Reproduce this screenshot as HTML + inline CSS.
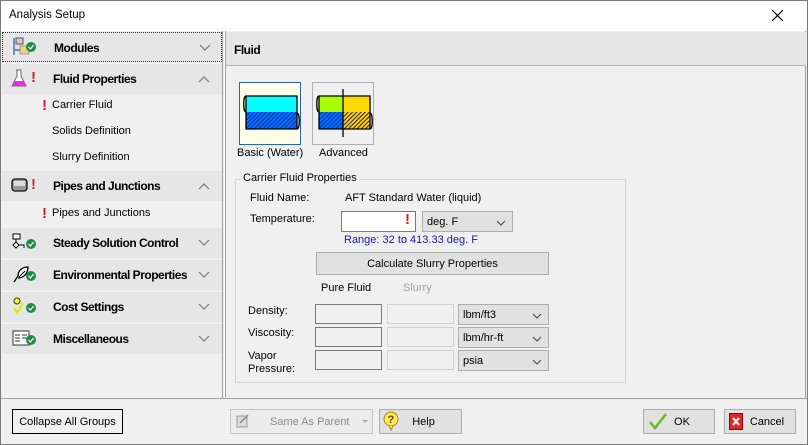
<!DOCTYPE html>
<html><head><meta charset="utf-8"><style>
*{box-sizing:border-box;margin:0;padding:0}
body{width:808px;height:445px;overflow:hidden;font-family:"Liberation Sans",sans-serif;font-size:11px;color:#000;background:#f0f0f0;position:relative}
.a{position:absolute}
.win{left:0;top:0;width:808px;height:445px;border:1px solid #7a7a7a;background:#f0f0f0}
.hd{left:2px;width:220px;height:30px;background:#e6e6e6;font-weight:bold;font-size:12px;letter-spacing:-0.5px}
.hd span.t{position:absolute;left:51px;top:8px}
.chev{position:absolute;left:196px;top:11px;width:12px;height:8px}
.it{left:52px;font-size:11px}
.ex{color:#d4202c;font-weight:bold;font-size:15px}
.box{background:#f0f0f0;border:1px solid #7a7a7a}
.box2{background:#f0f0f0;border:1px solid #cfcfcf}
.dd{background:#e1e1e1;border:1px solid #adadad;padding:4px 0 0 4px}
.dd svg{position:absolute;right:6px;top:8px}
.btn{background:#e1e1e1;border:1px solid #adadad;text-align:center}
</style></head><body>
<div class="a win"></div>
<div class="a" style="left:1px;top:1px;width:806px;height:30px;background:#fff"></div>
<div class="a" style="left:9px;top:9px;font-size:11.5px">Analysis Setup</div>
<svg class="a" style="left:772px;top:10px" width="11" height="11"><path d="M0 0L11 11M11 0L0 11" stroke="#000" stroke-width="1.2"/></svg>

<div class="a" style="left:1px;top:31px;width:222px;height:367px;background:#f0f0f0;border-right:1px solid #a0a0a0"></div>
<div class="a" style="left:224px;top:31px;width:1px;height:367px;background:#fff"></div>

<div class="a hd" style="top:32px;border:1px dotted #333"><span class="t">Modules</span>
<svg class="chev" viewBox="0 0 12 8"><path d="M1 1L6 6L11 1" fill="none" stroke="#777" stroke-width="1.2"/></svg></div>
<div class="a hd" style="top:64px"><span class="t">Fluid Properties</span>
<svg class="chev" viewBox="0 0 12 8"><path d="M1 7L6 2L11 7" fill="none" stroke="#777" stroke-width="1.2"/></svg></div>
<div class="a it" style="top:99px">Carrier Fluid</div>
<div class="a it" style="top:125px">Solids Definition</div>
<div class="a it" style="top:151px">Slurry Definition</div>
<div class="a hd" style="top:171px"><span class="t">Pipes and Junctions</span>
<svg class="chev" viewBox="0 0 12 8"><path d="M1 7L6 2L11 7" fill="none" stroke="#777" stroke-width="1.2"/></svg></div>
<div class="a it" style="top:207px">Pipes and Junctions</div>
<div class="a hd" style="top:228px"><span class="t">Steady Solution Control</span>
<svg class="chev" viewBox="0 0 12 8"><path d="M1 1L6 6L11 1" fill="none" stroke="#777" stroke-width="1.2"/></svg></div>
<div class="a hd" style="top:260px"><span class="t">Environmental Properties</span>
<svg class="chev" viewBox="0 0 12 8"><path d="M1 1L6 6L11 1" fill="none" stroke="#777" stroke-width="1.2"/></svg></div>
<div class="a hd" style="top:292px"><span class="t">Cost Settings</span>
<svg class="chev" viewBox="0 0 12 8"><path d="M1 1L6 6L11 1" fill="none" stroke="#777" stroke-width="1.2"/></svg></div>
<div class="a hd" style="top:324px"><span class="t">Miscellaneous</span>
<svg class="chev" viewBox="0 0 12 8"><path d="M1 1L6 6L11 1" fill="none" stroke="#777" stroke-width="1.2"/></svg></div>

<svg class="a" style="left:12px;top:37px" width="24" height="20"><rect x="4" y="1" width="7" height="6" fill="#ccc" stroke="#555"/><rect x="8" y="9" width="9" height="8" fill="#f3d27a" stroke="#999"/><path d="M2 1V18M3 13H8" stroke="#2850b0" stroke-width="1.2"/><circle cx="19" cy="10" r="5" fill="#1e8a4a"/><path d="M16.5 10l2 2 3-4" stroke="#fff" fill="none" stroke-width="1.2"/></svg>
<svg class="a" style="left:11px;top:69px" width="16" height="20"><path d="M5 1H10M6 1V7L1 17H15L10 7V1" fill="#fff" stroke="#666"/><path d="M3 12H13L15 17H1Z" fill="#e030e0"/></svg>
<div class="a ex" style="left:31px;top:69px">!</div>
<div class="a ex" style="left:42px;top:97px">!</div>
<svg class="a" style="left:11px;top:177px" width="18" height="16"><rect x="1" y="2" width="15" height="12" rx="3" fill="#999" stroke="#111" stroke-width="1.3"/><rect x="3" y="4" width="11" height="5" fill="#ddd"/></svg>
<div class="a ex" style="left:31px;top:176px">!</div>
<div class="a ex" style="left:42px;top:205px">!</div>
<svg class="a" style="left:12px;top:233px" width="24" height="20"><rect x="1" y="1" width="7" height="5" fill="#fff" stroke="#000"/><path d="M4 6V9L1 12L4 15L7 12L4 9M7 12H12V15" fill="#fff" stroke="#000"/><circle cx="19" cy="11" r="5" fill="#1e8a4a"/><path d="M16.5 11l2 2 3-4" stroke="#fff" fill="none" stroke-width="1.2"/></svg>
<svg class="a" style="left:12px;top:265px" width="24" height="20"><path d="M2 17L6 11C6 5 11 2 16 2C16 8 12 13 6 13" fill="#fff" stroke="#000" stroke-width="1.3"/><path d="M7 12L13 6" stroke="#000"/><circle cx="19" cy="11" r="5" fill="#1e8a4a"/><path d="M16.5 11l2 2 3-4" stroke="#fff" fill="none" stroke-width="1.2"/></svg>
<svg class="a" style="left:12px;top:297px" width="24" height="20"><circle cx="5" cy="4" r="3" fill="#ff0" stroke="#333"/><path d="M2 11L5 16L11 6" stroke="#e6e600" stroke-width="2" fill="none"/><circle cx="19" cy="11" r="5" fill="#1e8a4a"/><path d="M16.5 11l2 2 3-4" stroke="#fff" fill="none" stroke-width="1.2"/></svg>
<svg class="a" style="left:12px;top:329px" width="24" height="20"><rect x="1" y="2" width="16" height="14" fill="#fff" stroke="#333"/><path d="M3 6H8M3 9H8M3 12H8M10 6H15M10 9H15" stroke="#333"/><circle cx="19" cy="11" r="5" fill="#1e8a4a"/><path d="M16.5 11l2 2 3-4" stroke="#fff" fill="none" stroke-width="1.2"/></svg>

<div class="a" style="left:225px;top:31px;width:581px;height:367px;background:#f0f0f0;border-left:1px solid #a0a0a0;border-right:1px solid #a0a0a0"></div>
<div class="a" style="left:226px;top:32px;width:580px;height:34px;background:#e6e6e6;border-bottom:1px solid #b5b5b5"></div>
<div class="a" style="left:234px;top:43px;font-weight:bold;font-size:12px;letter-spacing:-0.5px">Fluid</div>

<div class="a" style="left:239px;top:82px;width:62px;height:63px;background:#fffde6;border:1px solid #2a62b0"></div>
<div class="a" style="left:312px;top:82px;width:62px;height:63px;background:#f0f0f0;border:1px solid #b0b0b0"></div>
<svg class="a" style="left:240px;top:83px" width="60" height="61">
<defs><pattern id="h" width="3" height="3" patternUnits="userSpaceOnUse" patternTransform="rotate(45)"><rect width="3" height="3" fill="#0a6cff"/><rect width="1" height="3" fill="#003aa0"/></pattern>
<pattern id="h2" width="3" height="3" patternUnits="userSpaceOnUse" patternTransform="rotate(45)"><rect width="3" height="3" fill="#ffd000"/><rect width="1" height="3" fill="#224"/></pattern></defs>
<rect x="6" y="13" width="51" height="16" fill="#0ff"/><rect x="6" y="29" width="51" height="17" fill="url(#h)"/>
<path d="M6 13H57V46H6Z M6 13C3 13 3 29 6 29 M57 30C60 30 60 46 57 46" fill="none" stroke="#000" stroke-width="1.3"/>
</svg>
<svg class="a" style="left:313px;top:83px" width="60" height="61">
<rect x="6" y="13" width="24" height="16" fill="#a8ff00"/><rect x="30" y="13" width="27" height="16" fill="#ffd800"/>
<rect x="6" y="29" width="24" height="17" fill="url(#h)"/><rect x="30" y="29" width="27" height="17" fill="url(#h2)"/>
<path d="M6 13H57V46H6Z M6 13C3 13 3 29 6 29 M57 30C60 30 60 46 57 46 M30 6V54" fill="none" stroke="#000" stroke-width="1.3"/>
</svg>
<div class="a" style="left:237px;top:147px">Basic (Water)</div>
<div class="a" style="left:319px;top:147px">Advanced</div>

<div class="a" style="left:235px;top:179px;width:391px;height:204px;border:1px solid #d5d5d5"></div>
<div class="a" style="left:241px;top:172px;background:#f0f0f0;padding:0 2px">Carrier Fluid Properties</div>
<div class="a" style="left:250px;top:192px">Fluid Name:</div>
<div class="a" style="left:345px;top:192px">AFT Standard Water (liquid)</div>
<div class="a" style="left:250px;top:213px">Temperature:</div>
<div class="a" style="left:341px;top:211px;width:75px;height:21px;background:#fff;border:1px solid #7a7a7a"></div>
<div class="a ex" style="left:405px;top:211px">!</div>
<div class="a dd" style="left:422px;top:211px;width:91px;height:21px">deg. F<svg width="10" height="6"><path d="M1 1L5 5L9 1" fill="none" stroke="#444"/></svg></div>
<div class="a" style="left:344px;top:234px;color:#1a1aa8">Range: 32 to 413.33 deg. F</div>
<div class="a btn" style="left:316px;top:252px;width:233px;height:23px;padding-top:5px">Calculate Slurry Properties</div>
<div class="a" style="left:321px;top:282px">Pure Fluid</div>
<div class="a" style="left:403px;top:282px;color:#a0a0a0">Slurry</div>

<div class="a" style="left:248px;top:305px">Density:</div>
<div class="a" style="left:248px;top:327px">Viscosity:</div>
<div class="a" style="left:248px;top:350px;line-height:13px">Vapor<br>Pressure:</div>
<div class="a box" style="left:315px;top:304px;width:67px;height:20px"></div>
<div class="a box" style="left:315px;top:327px;width:67px;height:20px"></div>
<div class="a box" style="left:315px;top:350px;width:67px;height:20px"></div>
<div class="a box2" style="left:387px;top:304px;width:67px;height:20px"></div>
<div class="a box2" style="left:387px;top:327px;width:67px;height:20px"></div>
<div class="a box2" style="left:387px;top:350px;width:67px;height:20px"></div>
<div class="a dd" style="left:458px;top:304px;width:91px;height:21px">lbm/ft3<svg width="10" height="6"><path d="M1 1L5 5L9 1" fill="none" stroke="#444"/></svg></div>
<div class="a dd" style="left:458px;top:327px;width:91px;height:21px">lbm/hr-ft<svg width="10" height="6"><path d="M1 1L5 5L9 1" fill="none" stroke="#444"/></svg></div>
<div class="a dd" style="left:458px;top:350px;width:91px;height:21px">psia<svg width="10" height="6"><path d="M1 1L5 5L9 1" fill="none" stroke="#444"/></svg></div>

<div class="a" style="left:1px;top:398px;width:806px;height:1px;background:#a0a0a0"></div>
<div class="a" style="left:12px;top:409px;width:111px;height:25px;background:#f0f0f0;border:1px solid #000;text-align:center;padding-top:6px">Collapse All Groups</div>
<div class="a" style="left:230px;top:409px;width:143px;height:25px;background:#ececec;border:1px solid #c4c4c4;color:#8a8a8a;padding:6px 0 0 39px">Same As Parent</div>
<svg class="a" style="left:236px;top:414px" width="14" height="14"><rect x="1" y="2" width="10" height="11" fill="#ddd" stroke="#999"/><path d="M4 9L12 1" stroke="#888" stroke-width="1.5"/></svg>
<svg class="a" style="left:362px;top:420px" width="6" height="4"><path d="M0 0H6L3 3Z" fill="#aaa"/></svg>
<div class="a btn" style="left:379px;top:409px;width:83px;height:25px;padding:6px 0 0 6px">Help</div>
<svg class="a" style="left:382px;top:411px" width="18" height="20"><circle cx="9" cy="8" r="7" fill="#ffe65a" stroke="#b08a00"/><path d="M7 15L9 19L11 15" fill="#ffe65a" stroke="#b08a00"/><text x="5.5" y="12" font-size="11" font-weight="bold" font-family="Liberation Sans" fill="#6a4a00">?</text></svg>
<div class="a btn" style="left:643px;top:409px;width:72px;height:25px;padding:6px 0 0 6px">OK</div>
<svg class="a" style="left:648px;top:413px" width="20" height="18"><path d="M2 9L7 15L18 1" fill="none" stroke="#6ab82a" stroke-width="2.5"/></svg>
<div class="a btn" style="left:724px;top:409px;width:72px;height:25px;padding:6px 0 0 14px">Cancel</div>
<svg class="a" style="left:729px;top:413px" width="14" height="17"><rect x="0.5" y="0.5" width="13" height="16" fill="#e02828" stroke="#900"/><path d="M4 5L10 12M10 5L4 12" stroke="#fff" stroke-width="2"/></svg>
</body></html>
